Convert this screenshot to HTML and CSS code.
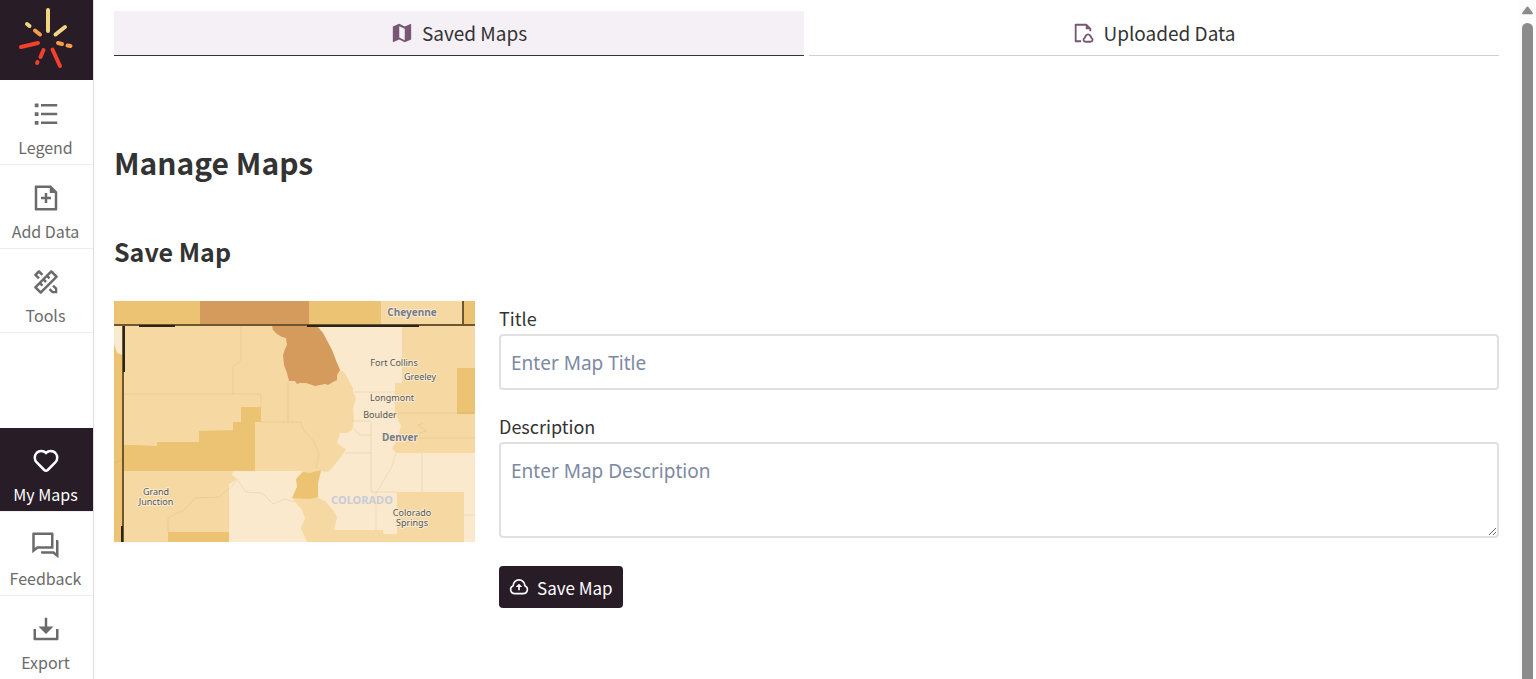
FILE: index.html
```
<!DOCTYPE html>
<html lang="en">
<head>
    <meta charset="UTF-8">
    <meta name="viewport" content="width=device-width, initial-scale=1.0">
    <title>My Maps</title>

    <link rel="stylesheet" href="styles.css">
</head>
<body>
    <nav class="sidebar">
        <a class="logo" href="#" aria-label="Home">
            <svg viewBox="0 0 93 80" fill="none" stroke-width="4" stroke-linecap="round">
                <path stroke="#f0d680" d="M48 10V31M65 27L55.500 34.500M27 24L29.500 26"/>
                <path stroke="#f99c4a" d="M35 30.500L40 34.500M58 43L62 44M67.500 45.500L70.500 46"/>
                <path stroke="#f3402b" d="M21 47L38 43M43.500 50L40.500 57M37.500 62L37.200 63M52.500 49.500L60 66"/>
            </svg>
        </a>
        <a class="nav-item" href="#">
            <svg class="nav-icon" viewBox="0 0 24 24"><path d="M8 4H21V6H8V4ZM3 3.500H6V6.500H3V3.500ZM3 10.500H6V13.500H3V10.500ZM3 17.500H6V20.500H3V17.500ZM8 11H21V13H8V11ZM8 18H21V20H8V18Z"/></svg>
            <span>Legend</span>
        </a>
        <a class="nav-item" href="#">
            <svg class="nav-icon" viewBox="0 0 24 24"><path d="M15 4H5V20H19V8H15V4ZM3 3C3 2.450 3.450 2 4 2H16L21 7V21C21 21.550 20.550 22 20 22H4C3.450 22 3 21.550 3 21V3ZM11 11V8H13V11H16V13H13V16H11V13H8V11H11Z"/></svg>
            <span>Add Data</span>
        </a>
        <a class="nav-item" href="#">
            <svg class="nav-icon" viewBox="0 0 24 24"><path d="M7.050 14.121L4.929 16.243L7.757 19.071L19.071 7.757L16.243 4.929L14.121 7.050L15.536 8.464L14.121 9.879L12.707 8.464L11.293 9.879L12.707 11.293L11.293 12.707L9.879 11.293L8.464 12.707L9.879 14.121L8.464 15.536L7.050 14.121ZM16.950 2.808L21.192 7.050C21.583 7.441 21.583 8.074 21.192 8.464L8.464 21.192C8.074 21.583 7.441 21.583 7.050 21.192L2.808 16.950C2.417 16.559 2.417 15.926 2.808 15.536L15.536 2.808C15.926 2.417 16.559 2.417 16.950 2.808ZM14.121 18.364L15.535 16.950L17.779 19.194H19.193V17.780L16.949 15.536L18.363 14.122L21 16.758V21H16.757L14.121 18.364ZM5.636 9.878L2.808 7.050C2.417 6.659 2.417 6.026 2.808 5.636L5.636 2.807C6.026 2.417 6.660 2.417 7.050 2.807L9.879 5.636L8.464 7.050L6.343 4.929L4.929 6.343L7.050 8.464L5.636 9.878Z"/></svg>
            <span>Tools</span>
        </a>
        <div class="nav-bottom">
            <a class="nav-item active" href="#" aria-current="page">
                <svg class="nav-icon" viewBox="0 0 24 24"><path fill="none" stroke="currentColor" stroke-width="2" d="M12 5.500C9.800 3.300 6.500 3.500 4.600 5.400C2.500 7.600 2.500 11 4.600 13.200L10.600 19.200Q12 20.400 13.400 19.200L19.400 13.200C21.500 11 21.500 7.600 19.400 5.400C17.500 3.500 14.200 3.300 12 5.500Z"/></svg>
                <span>My Maps</span>
            </a>
            <a class="nav-item" href="#">
                <svg class="nav-icon" viewBox="0 0 24 24"><path d="M5.455 15L1 18.500V3C1 2.448 1.448 2 2 2H17C17.552 2 18 2.448 18 3V15H5.455ZM4.763 13H16V4H3V14.385L4.763 13ZM8 17H18.237L20 18.385V8H21C21.552 8 22 8.448 22 9V22.500L17.546 19H9C8.448 19 8 18.552 8 18V17Z"/></svg>
                <span>Feedback</span>
            </a>
            <a class="nav-item" href="#">
                <svg class="nav-icon" viewBox="0 0 24 24"><path d="M13 10H18L12 16L6 10H11V3H13V10ZM4 19H20V12H22V20C22 20.552 21.552 21 21 21H3C2.448 21 2 20.552 2 20V12H4V19Z"/></svg>
                <span>Export</span>
            </a>
        </div>
    </nav>

    <main>
        <div class="tabs" role="tablist">
            <button class="tab selected" type="button" role="tab" aria-selected="true">
                <svg class="tab-icon" viewBox="0 0 24 24"><path fill-rule="evenodd" d="M2 5L9 2L15 5L21.300 2.300Q22 2.100 22 2.800V19L15 22L9 19L2.700 21.700Q2 21.900 2 21.200ZM9 4.500V17L15 19.800V7.300Z"/></svg>
                Saved Maps
            </button>
            <button class="tab" type="button" role="tab" aria-selected="false">
                <svg class="tab-icon" viewBox="0 0 24 24"><path d="M15 4H5V20H10V22H4Q3 22 3 21V3Q3 2 4 2H16L21 7V10H19V8H15Z"/><path fill="none" stroke="currentColor" stroke-width="2" d="M14.500 21.500H20.500A2.200 2.200 0 0 0 21.300 17.400L19.800 14.800A2.700 2.700 0 0 0 15.200 14.800L13.700 17.400A2.200 2.200 0 0 0 14.500 21.500Z"/></svg>
                Uploaded Data
            </button>
        </div>

        <h1>Manage Maps</h1>
        <h2>Save Map</h2>

        <div class="save-map">
            <svg class="map-preview" viewBox="0 0 361 241" role="img" aria-label="Map of Colorado">
                <rect width="361" height="241" fill="#f6d9a2"/>

                <!-- lightest counties -->
                <g fill="#fae9cc">
                    <path d="M203 25L209 32L218 49L223 62L226 69L231 72L235 80L239 87L239 91L242 97L239 107L240 118L238 129L233 132L226 132L223 142L228 146L232 148L226 157L219 166L214 171L207 170L204 182V197L211 200L219 209L223 216L220 229H269V233H288V241H283V191H350V241H361V152H282L278 147L283 140L287 125L281 112V82H288V25Z"/>
                    <path d="M119 170H189L183 176V186L178 197L188 209L191 217L187 227L193 241H115V183L123 178L118 174Z"/>
                    <path d="M0 25H8V54L3 52L0 43Z"/>
                </g>
                <rect x="283" y="191" width="67" height="50" fill="#f6d9a2"/>
                <path fill="#f6d9a2" d="M220 229H269V233H288V241H218Z"/>

                <!-- darker counties -->
                <g fill="#ebc372">
                    <path d="M0 0H86V24H0ZM195 0H267V24H195ZM350 0H361V24H350Z"/>
                    <path d="M0 43L3 52L8 54V241H0Z"/>
                    <path d="M9 144H20L43 145V141H85V130L119 129V121H127V106H147V121H141V170H9Z"/>
                    <path d="M343 67H361V113H343ZM54 231H115V241H54Z"/>
                    <path d="M189 171L196 172L207 169L204 182V196L196 198L178 197L183 186L182 178Z"/>
                </g>
                <g fill="#d59b5d">
                    <path d="M86 0H195V24H86Z"/>
                    <path d="M158 25L159 29L163 33L168 36L172 37L173 44L171 48L169 54L170 64L173 72L175 80H181L183 83L186 82L192 82L201 85L206 84L211 83L214 84L219 81L223 79V74L226 69L223 62L218 49L209 32L203 25Z"/>
                </g>

                <!-- county lines -->
                <path fill="none" stroke="#b98d3c" stroke-opacity=".16" d="M127 25V59L119 66V93M9 93H147V106M174 80V121M147 121H181M181 121H187L190 130L199 139L205 153L202 167M54 231V217L70 209L81 197L105 196L119 184L123 178M123 178L132 191L148 192L159 203L171 198L181 201M240 91H281M238 120H257M257 121V191H283M231 152H257M281 112H361M287 137H361M282 152L278 165L263 191M308 152V191M350 214H361M262 191V229M238 126L246 134H257M291 145L301 134L312 130L304 124L309 122M0 162L8 159"/>

                <!-- state borders -->
                <path fill="none" stroke="#6d5630" stroke-width="2" d="M0 24H361M9 24V241M349 0V24"/>
                <path fill="none" stroke="#2a2419" stroke-width="2" d="M25 25H61M193 25H305M10 25V71M8 225V241"/>

                <g class="map-labels">
                    <text class="city-major" x="298" y="15">Cheyenne</text>
                    <text x="280" y="65">Fort Collins</text>
                    <text x="306" y="79">Greeley</text>
                    <text x="278" y="100">Longmont</text>
                    <text x="266" y="117">Boulder</text>
                    <text class="city-major" x="286" y="140">Denver</text>
                    <text class="state" x="248" y="203">COLORADO</text>
                    <text x="298" y="215">Colorado</text>
                    <text x="298" y="225">Springs</text>
                    <text x="42" y="194">Grand</text>
                    <text x="42" y="204">Junction</text>
                </g>
            </svg>

            <form class="map-form">
                <label for="title">Title</label>
                <input id="title" type="text" placeholder="Enter Map Title">
                <label for="description">Description</label>
                <textarea id="description" placeholder="Enter Map Description"></textarea>
                <button class="save-button" type="button">
                    <svg viewBox="0 0 24 24"><path fill="none" stroke="currentColor" stroke-width="2" d="M7 20H17A5 5 0 0 0 19 10.400A7 7 0 0 0 5 10.400A5 5 0 0 0 7 20Z"/><path d="M12 8L16 12H13V16H11V12H8Z"/></svg>
                    Save Map
                </button>
            </form>
        </div>
    </main>

    <div class="scrollbar" aria-hidden="true">
        <svg viewBox="0 0 12 10"><path fill="#8b8b8b" d="M5 1Q6 0 7 1L12 8Q12 9 11 9H1Q0 9 0 8Z"/></svg>
        <div class="thumb"></div>
    </div>
</body>
</html>
```
FILE: styles.css
```
* {
    box-sizing: border-box;
    padding: 0;
    margin: 0;
}

body {
    display: flex;
    height: 100vh;
    overflow: hidden;
    background-color: white;
    color: #333333;
    font-family: "Noto Sans CJK SC", "Noto Sans", sans-serif;
}

button, input, textarea {
    font: inherit;
    color: inherit;
}

svg {
    display: block;
    fill: currentColor;
}

/* sidebar */
.sidebar {
    display: flex;
    flex-direction: column;
    flex: none;
    width: 94px;
    border-right: 1px solid #dddddd;
}

.logo {
    flex: none;
    height: 80px;
    margin-bottom: 1px;
    background-color: #281c27;
}

.logo svg {
    height: 80px;
}

.nav-item {
    display: flex;
    flex-direction: column;
    align-items: center;
    flex: none;
    gap: 6px;
    height: 84px;
    padding-top: 18px;
    padding-right: 2px;
    border-bottom: 1px solid #eeeeee;
    color: #6b6b6b;
    font-size: 16px;
    line-height: 24px;
    text-decoration: none;
}

.nav-icon {
    width: 30px;
    height: 30px;
}

.nav-item.active {
    background-color: #281c27;
    color: white;
}

.nav-bottom {
    margin-top: auto;
    margin-bottom: -1px;
}

/* main panel */
main {
    flex: 1;
    min-width: 0;
    padding: 11px 20px;
}

.tabs {
    display: flex;
    gap: 5px;
    margin-bottom: 82px;
}

.tab {
    display: flex;
    flex: 1;
    align-items: center;
    justify-content: center;
    gap: 9px;
    height: 45px;
    padding-bottom: 1px;
    border: none;
    border-bottom: 1px solid #d5cdd4;
    background: none;
    font-size: 19px;
}

.tab.selected {
    background-color: #f5f0f5;
    border-bottom-color: #333333;
}

.tab-icon {
    width: 22px;
    height: 22px;
    color: #795576;
}

h1 {
    margin-bottom: 45px;
    font-size: 30px;
    line-height: 48px;
}

h2 {
    margin-bottom: 30px;
    font-size: 25px;
    line-height: 40px;
}

.save-map {
    display: flex;
    align-items: flex-start;
    gap: 24px;
}

.map-preview {
    flex: none;
    width: 361px;
}

.map-labels {
    fill: #55565a;
    stroke: #fae9cc;
    stroke-width: 2px;
    paint-order: stroke;
    font-family: "Noto Sans", sans-serif;
    font-size: 9px;
    text-anchor: middle;
}

.city-major {
    fill: #777c8a;
    font-size: 10px;
    font-weight: bold;
}

.state {
    fill: #c9ccd8;
    font-size: 11px;
    font-weight: bold;
}

/* form */
.map-form {
    display: flex;
    flex: 1;
    flex-direction: column;
    align-items: flex-start;
    padding-top: 3px;
}

.map-form label {
    margin-bottom: 2px;
    font-size: 18px;
    line-height: 28px;
}

.map-form input,
.map-form textarea {
    width: 100%;
    padding: 11px 10px 9px;
    border: 2px solid #e0e0e0;
    border-radius: 4px;
    font-family: "Noto Sans", sans-serif;
    font-size: 19px;
    line-height: 32px;
}

.map-form input {
    height: 56px;
    margin-bottom: 22px;
}

.map-form textarea {
    height: 96px;
    margin-bottom: 28px;
    resize: vertical;
}

.map-form ::placeholder {
    color: #7d89a3;
}

.save-button {
    display: flex;
    align-items: center;
    gap: 8px;
    height: 42px;
    padding: 0 10px;
    border: none;
    border-radius: 4px;
    background-color: #281c27;
    color: white;
    font-size: 17px;
}

.save-button svg {
    width: 20px;
    height: 20px;
}

/* scrollbar */
.scrollbar {
    display: flex;
    flex: none;
    flex-direction: column;
    gap: 8px;
    width: 17px;
    padding: 6px 3px 0;
    background-color: #fcfcfc;
}

.scrollbar svg {
    width: 11px;
}

.thumb {
    flex: 1;
    width: 11px;
    border-radius: 6px 6px 0 0;
    background-color: #8b8b8b;
}
```
